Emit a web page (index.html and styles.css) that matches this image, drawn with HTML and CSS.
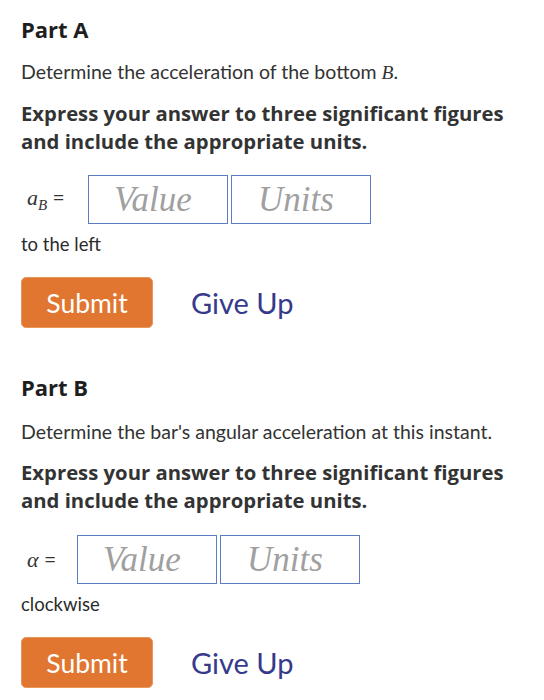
FILE: index.html
```html
<!DOCTYPE html>
<html>
<head>
<meta charset="utf-8">
<link rel="stylesheet" href="styles.css">
</head>
<body>
<section class="part">
  <h2 class="title">Part A</h2>
  <p class="prompt">Determine the acceleration of the bottom <i class="math">B</i>.</p>
  <p class="instr">Express your answer to three significant figures and include the appropriate units.</p>
  <div class="answer">
    <span class="label label-a"><i class="math">a<sub>B</sub></i> =</span>
    <div class="box">Value</div>
    <div class="box">Units</div>
  </div>
  <p class="note">to the left</p>
  <div class="actions">
    <button class="submit">Submit</button>
    <span class="giveup">Give Up</span>
  </div>
</section>
<section class="part part-b">
  <h2 class="title">Part B</h2>
  <p class="prompt">Determine the bar's angular acceleration at this instant.</p>
  <p class="instr">Express your answer to three significant figures and include the appropriate units.</p>
  <div class="answer">
    <span class="label label-b"><i class="math">α</i> =</span>
    <div class="box">Value</div>
    <div class="box">Units</div>
  </div>
  <p class="note">clockwise</p>
  <div class="actions">
    <button class="submit">Submit</button>
    <span class="giveup">Give Up</span>
  </div>
</section>
</body>
</html>
```
FILE: styles.css
```css
html, body { margin: 0; padding: 0; background: #fff; }
body {
  font-family: Lato, "Open Sans", sans-serif;
  color: #2b2b2b;
  padding: 14px 20px 0 21px;
}
.part { display: flex; flex-direction: column; align-items: flex-start; }
.part-b { margin-top: 44px; }
.title { margin: 0; font-family: "Open Sans", sans-serif; font-size: 22px; font-weight: 700; line-height: 30px; color: #1e1e1e; }
.prompt { margin: 15px 0 0; font-size: 19.5px; line-height: 26px; color: #333; }
.part-b .prompt { margin-top: 17px; }
.math { font-family: "Liberation Serif", serif; font-style: italic; }
.instr { margin: 13px 0 0; font-family: "Open Sans", sans-serif; font-size: 20.3px; font-weight: 700; line-height: 28px; color: #333; max-width: 503px; }
.answer { display: flex; align-items: center; margin-top: 20px; }
.part-b .answer { margin-top: 21px; }
.label { font-size: 21px; color: #333; margin-left: 6px; }
.label .math { font-size: 22px; }
.label-a { width: 61px; }
.label-b { width: 50px; }
.label sub { font-size: 15px; }
.box {
  width: 128px; height: 47px; border: 1px solid #5b7dc4;
  display: flex; align-items: center; justify-content: center;
  font-family: "Liberation Serif", serif; font-style: italic; font-size: 35px; color: #a0a0a0;
  margin-right: 3px; padding-right: 10px; box-sizing: content-box;
}
.note { margin: 8px 0 0; font-size: 18.5px; line-height: 24px; color: #2b2b2b; }
.actions { display: flex; align-items: center; margin-top: 21px; }
.submit {
  width: 132px; height: 51px; border: 1px solid #e8955a; border-radius: 5px;
  background: #e0762f; color: #fff; font-family: Lato, sans-serif; font-size: 26.5px; padding: 0;
  box-sizing: border-box;
}
.giveup { margin-left: 38px; font-size: 29px; color: #353a8a; }
```
